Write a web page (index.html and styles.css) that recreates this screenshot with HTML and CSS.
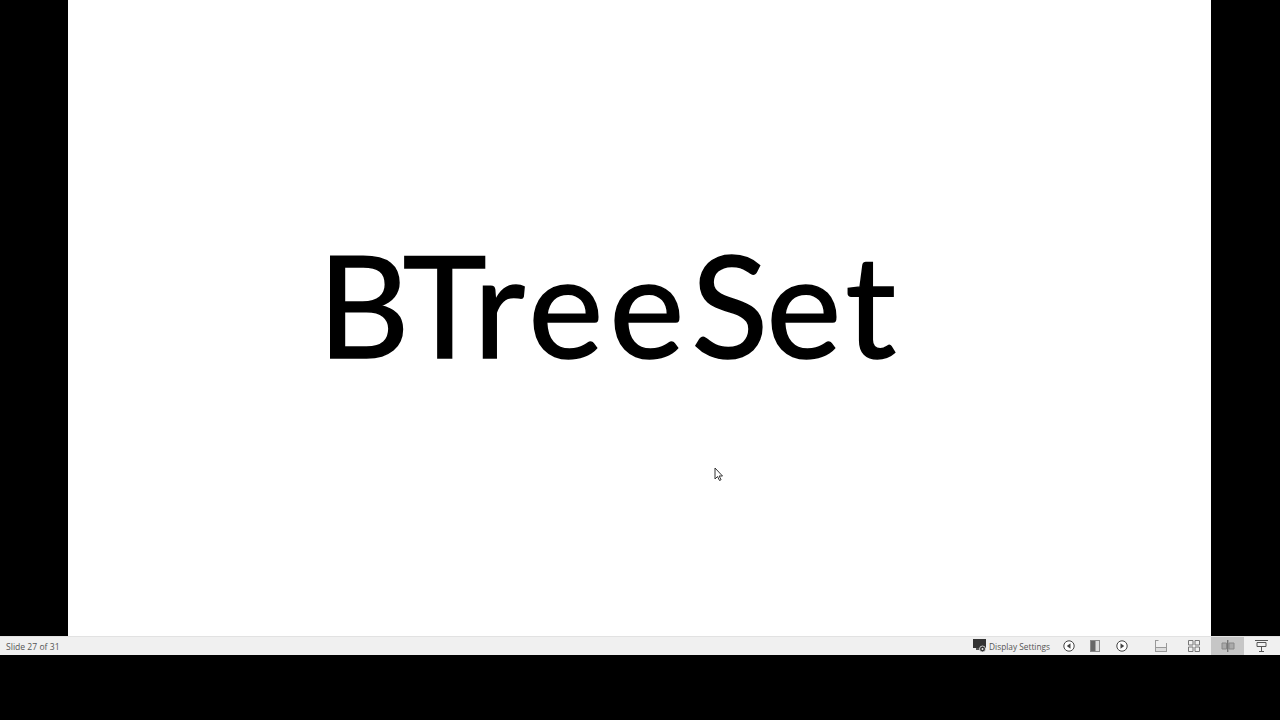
FILE: index.html
```html
<!DOCTYPE html>
<html lang="en">
<head>
<meta charset="utf-8">
<title>BTreeSet</title>
<link rel="stylesheet" href="styles.css">
</head>
<body>
<div class="app">
  <main class="stage">
    <section class="slide">
      <h1 class="title"><span class="k-b">B</span><span class="k-t">T</span><span class="k-r">r</span><span class="k-e1">e</span><span class="k-e2">e</span><span class="k-s">S</span><span class="k-e3">e</span>t</h1>
      <svg class="cursor" width="10" height="15" viewBox="0 0 10 15"><path d="M1 1v11l2.500-2.500 2 4 1.600-.8-2-3.700H8.500z" fill="#fff" stroke="#333" stroke-width="1"/></svg>
    </section>
  </main>
  <footer class="status">
    <span class="count">Slide 27 of 31</span>
    <div class="tools">
      <span class="display">
        <svg class="ic" width="14" height="14" viewBox="0 0 14 14"><rect x="0" y="0" width="13" height="9" fill="#333"/><rect x="3" y="9" width="5" height="2" fill="#555"/><circle cx="9.500" cy="10" r="3" fill="#333" stroke="#eee" stroke-width=".8"/><circle cx="9.500" cy="10" r="1" fill="#eee"/></svg>
        <span>Display Settings</span>
      </span>
      <svg class="ic prev" width="12" height="12" viewBox="0 0 12 12"><circle cx="6" cy="6" r="5.200" fill="#fff" stroke="#444"/><path d="M7.500 3.200v5.600L3.800 6z" fill="#444"/></svg>
      <svg class="ic pane" width="10" height="12" viewBox="0 0 10 12"><rect x=".5" y=".5" width="9" height="11" fill="#ddd" stroke="#888"/><rect x="1" y="1" width="4.500" height="10" fill="#666"/></svg>
      <svg class="ic next" width="12" height="12" viewBox="0 0 12 12"><circle cx="6" cy="6" r="5.200" fill="#fff" stroke="#444"/><path d="M4.500 3.200v5.600L8.200 6z" fill="#444"/></svg>
      <svg class="ic notes" width="12" height="12" viewBox="0 0 12 12"><rect x="1" y="8" width="10" height="3" fill="#ddd"/><path d="M.5 0v12M.5.500h3M.5 7.500h11M.5 11.500h11M11.500 3v9" fill="none" stroke="#999"/></svg>
      <svg class="ic sorter" width="12" height="12" viewBox="0 0 12 12"><path d="M.5.500h4.500v4.500H.5zM7 .5h4.500v4.500H7zM.5 7h4.500v4.500H.5zM7 7h4.500v4.500H7z" fill="none" stroke="#777"/></svg>
      <span class="active"><svg width="14" height="12" viewBox="0 0 14 12"><path d="M1 3h4.500v6H1zM8 3h5v6H8z" fill="#aaa" stroke="#888"/><path d="M6.800 0v12" stroke="#555"/></svg></span>
      <svg class="ic show" width="13" height="12" viewBox="0 0 13 12"><path d="M0 .5h13M2 2.500h9v4H2zM6.500 6.500v4.500M4 11.500h5" fill="none" stroke="#555"/></svg>
    </div>
  </footer>
  <div class="below"></div>
</div>
</body>
</html>
```
FILE: styles.css
```css
* { box-sizing: border-box; }
html, body { margin: 0; height: 100%; background: #000; overflow: hidden; }
.app { width: 1280px; height: 720px; display: flex; flex-direction: column; background: #000; }
.stage { height: 636px; display: flex; padding-left: 68px; }
.slide { position: relative; width: 1143px; height: 636px; background: #fff; display: flex; justify-content: center; align-items: flex-start; }
.title { margin: 218px 0 0 -62px; font: 400 142px/1.2 Lato, "Open Sans", sans-serif; color: #000; letter-spacing: 3px; -webkit-text-stroke: 1.5px #000; }
.k-b { letter-spacing: -7px; }
.k-t { letter-spacing: -13px; }
.k-r { letter-spacing: 3px; }
.k-e1 { letter-spacing: 6px; }
.k-e2 { letter-spacing: 7px; }
.k-s { letter-spacing: -2px; }
.k-e3 { letter-spacing: 4px; }
.cursor { position: absolute; left: 645.500px; top: 467px; }
.status { height: 19px; background: #f0f0f0; border-top: 1px solid #e2e2e2; display: flex; align-items: center; justify-content: space-between; color: #555; font: 400 8.600px "Open Sans", sans-serif; padding-left: 6px; }
.count { position: relative; top: .5px; }
.tools { display: flex; align-items: center; height: 100%; }
.display { display: flex; align-items: center; gap: 2px; margin-right: 13px; font-size: 8.300px; }
.ic { display: block; flex: none; }
.pane { margin-left: 15px; }
.next { margin-left: 16px; }
.notes { margin-left: 27px; }
.sorter { margin-left: 21px; }
.active { width: 33px; height: 18px; margin-left: 11px; background: #c6c6c6; display: flex; align-items: center; justify-content: center; }
.show { margin: 0 12px 0 11px; }
.below { flex: 1; background: #000; }
```
